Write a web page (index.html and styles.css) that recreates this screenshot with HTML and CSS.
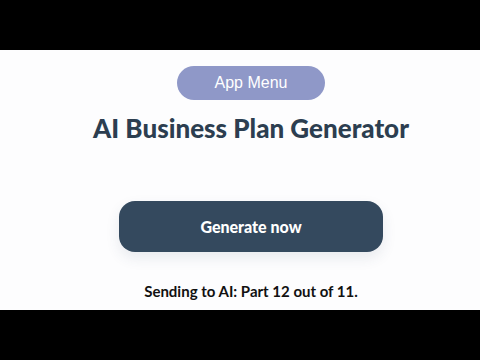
FILE: index.html
```html
<!DOCTYPE html>
<html>
<head>
<meta charset="utf-8">
<link rel="stylesheet" href="styles.css">
</head>
<body>
<div class="bar"></div>
<main class="stage">
  <button class="menu-btn">App Menu</button>
  <h1 class="title">AI Business Plan Generator</h1>
  <button class="gen-btn">Generate now</button>
  <p class="status">Sending to AI: Part 12 out of 11.</p>
</main>
<div class="bar"></div>
</body>
</html>
```
FILE: styles.css
```css
html, body {
  margin: 0;
  padding: 0;
  background: #000;
  width: 480px;
  height: 360px;
  overflow: hidden;
}
.bar {
  height: 50px;
  background: #000;
}
.stage {
  height: 260px;
  background: #fdfdfe;
  display: flex;
  flex-direction: column;
  align-items: center;
  box-sizing: border-box;
  padding-top: 16px;
  padding-left: 22px;
}
.menu-btn {
  width: 148px;
  height: 34px;
  border: none;
  border-radius: 17px;
  background: #8f98c8;
  color: #fff;
  font-family: "Liberation Sans", sans-serif;
  font-size: 16px;
  padding: 0;
}
.title {
  margin: 13px 0 0;
  font-family: "Lato", sans-serif;
  font-weight: 900;
  font-size: 26px;
  color: #2c3e50;
  line-height: 30px;
}
.gen-btn {
  margin-top: 58px;
  width: 264px;
  height: 51px;
  border: none;
  border-radius: 16px;
  background: #34495e;
  color: #fff;
  font-family: "Lato", sans-serif;
  font-weight: 900;
  font-size: 16px;
  padding: 0;
  box-shadow: 0 6px 14px rgba(52, 73, 94, 0.10);
}
.status {
  margin: 30px 0 0;
  font-family: "Lato", sans-serif;
  font-weight: 700;
  font-size: 15px;
  color: #111;
  line-height: 18px;
}
```
